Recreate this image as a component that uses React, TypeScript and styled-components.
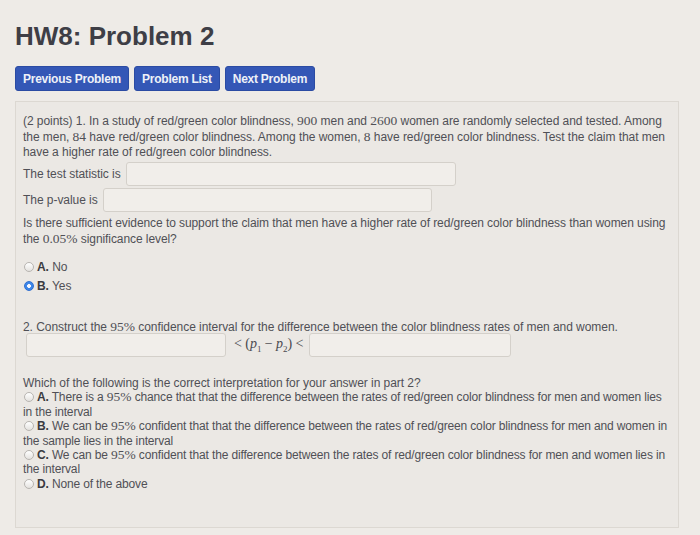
import React from 'react';
import styled, { createGlobalStyle } from 'styled-components';

const GlobalStyle = createGlobalStyle`
  html, body {
    margin: 0;
    padding: 0;
    background: #eeebe7;
  }
  body {
    font-family: 'Liberation Sans', Arial, Helvetica, sans-serif;
  }
`;

const Page = styled.div`
  padding: 20px 0 0 15px;
  width: 664px;
`;

const Title = styled.h1`
  margin: 0;
  font-size: 26px;
  line-height: 32px;
  font-weight: 700;
  color: #3e3e46;
`;

const ButtonBar = styled.div`
  display: flex;
  gap: 5px;
  margin-top: 14px;
`;

const NavButton = styled.button`
  height: 25px;
  padding: 0 7px;
  border: 1px solid #2b4ba3;
  border-radius: 3px;
  background: #3457b6;
  color: #eef1f8;
  font-family: 'Liberation Sans', Arial, sans-serif;
  font-size: 12px;
  font-weight: 700;
  letter-spacing: -0.25px;
  cursor: pointer;
`;

const Panel = styled.div`
  box-sizing: border-box;
  margin-top: 10px;
  height: 427px;
  padding: 11px 10px 0 7px;
  border: 1px solid #dcd8d2;
  background: #ebe8e4;
  color: #505056;
  font-size: 12px;
  letter-spacing: -0.05px;
`;

const Para = styled.div<{ $gap?: number; $lh?: number; $ls?: number }>`
  margin-top: ${(p) => p.$gap ?? 0}px;
  line-height: ${(p) => p.$lh ?? 15}px;
  ${(p) => (p.$ls !== undefined ? `letter-spacing: ${p.$ls}px;` : '')}
`;

const Line = styled.div`
  white-space: nowrap;
`;

const Num = styled.span`
  font-family: 'Liberation Serif', 'Times New Roman', serif;
  font-size: 13.5px;
  letter-spacing: 0;
`;

const AnswerRow = styled.div`
  display: flex;
  align-items: center;
  height: 24px;
  margin-top: 2px;
`;

const AnswerBox = styled.input<{ $w: number; $ml?: number }>`
  box-sizing: border-box;
  width: ${(p) => p.$w}px;
  height: 24px;
  margin: 0 0 0 ${(p) => p.$ml ?? 5}px;
  border: 1px solid #d4d0ca;
  border-radius: 3px;
  background: #f1eeea;
  outline: none;
`;

const Radio = styled.span<{ $on?: boolean }>`
  display: inline-block;
  box-sizing: border-box;
  width: 10px;
  height: 10px;
  margin: 0 3px 0 1px;
  vertical-align: -1px;
  border-radius: 50%;
  border: 1px solid ${(p) => (p.$on ? '#2f6fd0' : '#b8b5b1')};
  background: ${(p) =>
    p.$on
      ? 'radial-gradient(circle, #f4f7ff 0 1.6px, #3d86e8 2.2px)'
      : 'linear-gradient(#ffffff, #e4e2df)'};
`;

const Letter = styled.b`
  color: #3a3a40;
`;

const IntervalRow = styled.div`
  display: flex;
  align-items: center;
  margin-top: -2px;
`;

const MathExpr = styled.span`
  margin: 0 6px 0 8px;
  font-family: 'Liberation Serif', 'Times New Roman', serif;
  font-size: 14px;
  color: #4a4a50;
  white-space: nowrap;

  i {
    font-style: italic;
  }
  sub {
    font-size: 9px;
  }
`;

const part2Options = [
  {
    key: 'A',
    first: (
      <>
        There is a <Num>95%</Num> chance that that the difference between the rates of
        red/green color blindness for men and women lies
      </>
    ),
    rest: 'in the interval',
  },
  {
    key: 'B',
    first: (
      <>
        We can be <Num>95%</Num> confident that that the difference between the rates of
        red/green color blindness for men and women in
      </>
    ),
    rest: 'the sample lies in the interval',
  },
  {
    key: 'C',
    first: (
      <>
        We can be <Num>95%</Num> confident that the difference between the rates of
        red/green color blindness for men and women lies in
      </>
    ),
    rest: 'the interval',
  },
  { key: 'D', first: <>None of the above</>, rest: '' },
];

export default function App() {
  return (
    <>
      <GlobalStyle />
      <Page>
        <Title>HW8: Problem 2</Title>
        <ButtonBar>
          <NavButton>Previous Problem</NavButton>
          <NavButton>Problem List</NavButton>
          <NavButton>Next Problem</NavButton>
        </ButtonBar>
        <Panel>
          <Para>
            <Line>
              (2 points) 1. In a study of red/green color blindness, <Num>900</Num> men and{' '}
              <Num>2600</Num> women are randomly selected and tested. Among
            </Line>
            <Line>
              the men, <Num>84</Num> have red/green color blindness. Among the women,{' '}
              <Num>8</Num> have red/green color blindness. Test the claim that men
            </Line>
            <Line>have a higher rate of red/green color blindness.</Line>
          </Para>
          <AnswerRow>
            The test statistic is
            <AnswerBox $w={330} />
          </AnswerRow>
          <AnswerRow>
            The p-value is
            <AnswerBox $w={329} />
          </AnswerRow>
          <Para $gap={4} $ls={-0.08}>
            <Line>
              Is there sufficient evidence to support the claim that men have a higher rate of
              red/green color blindness than women using
            </Line>
            <Line>
              the <Num>0.05%</Num> significance level?
            </Line>
          </Para>
          <Para $gap={11} $lh={18.5}>
            <Line>
              <Radio />
              <Letter>A.</Letter> No
            </Line>
            <Line>
              <Radio $on />
              <Letter>B.</Letter> Yes
            </Line>
          </Para>
          <Para $gap={24}>
            <Line>
              2. Construct the <Num>95%</Num> confidence interval for the difference between
              the color blindness rates of men and women.
            </Line>
          </Para>
          <IntervalRow>
            <AnswerBox $w={200} $ml={3} />
            <MathExpr>
              &lt; (<i>p</i>
              <sub>1</sub> − <i>p</i>
              <sub>2</sub>) &lt;
            </MathExpr>
            <AnswerBox $w={202} $ml={0} />
          </IntervalRow>
          <Para $gap={19} $lh={14.4}>
            <Line>
              Which of the following is the correct interpretation for your answer in part 2?
            </Line>
          </Para>
          <Para $lh={14.4} $ls={-0.15}>
            {part2Options.map((o) => (
              <React.Fragment key={o.key}>
                <Line>
                  <Radio />
                  <Letter>{o.key}.</Letter> {o.first}
                </Line>
                {o.rest && <Line>{o.rest}</Line>}
              </React.Fragment>
            ))}
          </Para>
        </Panel>
      </Page>
    </>
  );
}
